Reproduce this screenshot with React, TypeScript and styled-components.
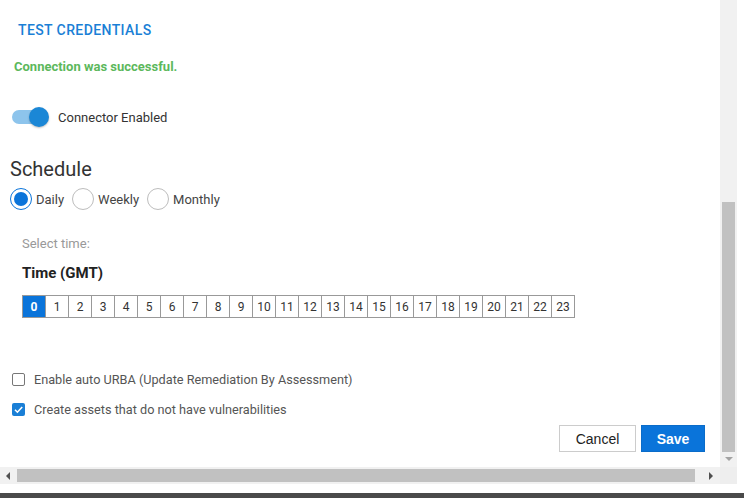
import React, { useState } from "react"
import styled, { createGlobalStyle } from "styled-components"

const GlobalStyle = createGlobalStyle`
    html, body {
        margin: 0;
        padding: 0;
        background: #ffffff;
    }
    body {
        font-family: Roboto, "Liberation Sans", sans-serif;
        color: #333333;
    }
`

const Page = styled.div`
    width: 744px;
    height: 498px;
    display: flex;
    flex-direction: column;
    overflow: hidden;
    background: #ffffff;
`
const Top = styled.div`
    display: flex;
    height: 467px;
`
const Content = styled.div`
    width: 720px;
    box-sizing: border-box;
    padding: 21px 15px 0 10px;
    display: flex;
    flex-direction: column;
`
const VScroll = styled.div`
    width: 17px;
    background: #f1f1f1;
    display: flex;
    flex-direction: column;
    justify-content: flex-end;
    align-items: center;
    padding-bottom: 6px;
    box-sizing: border-box;
`
const VThumb = styled.div`
    width: 13px;
    height: 250px;
    background: #c1c1c1;
`
const Arrow = styled.div<{ dir: "down" | "left" | "right"; color: string }>`
    width: 0;
    height: 0;
    border: 4px solid transparent;
    ${({ dir, color }) =>
        dir === "down"
            ? `border-top: 4px solid ${color}; border-bottom-width: 0; margin-top: 5px;`
            : dir === "left"
            ? `border-right: 4px solid ${color}; border-left-width: 0;`
            : `border-left: 4px solid ${color}; border-right-width: 0;`}
`
const HScrollRow = styled.div`
    display: flex;
    height: 17px;
`
const HScroll = styled.div`
    width: 720px;
    background: #f1f1f1;
    display: flex;
    align-items: center;
    padding: 0 7px 0 6px;
    box-sizing: border-box;
    gap: 7px;
`
const HThumb = styled.div`
    flex: 1;
    height: 13px;
    background: #c1c1c1;
    margin-right: 7px;
`
const Corner = styled.div`
    width: 17px;
    background: #eeeeee;
`
const DarkBar = styled.div`
    margin-top: 9px;
    height: 5px;
    background: #4a4a4a;
`

const LinkButton = styled.div`
    margin: 1px 0 0 8px;
    font-size: 14px;
    line-height: 16px;
    font-weight: 500;
    letter-spacing: 0.4px;
    color: #1a7fd6;
    text-transform: uppercase;
`
const Success = styled.div`
    margin: 21px 0 0 4px;
    font-size: 13px;
    line-height: 16px;
    font-weight: 700;
    color: #5cb85c;
`
const ToggleRow = styled.div`
    margin: 32px 0 0 2px;
    display: flex;
    align-items: center;
    height: 20px;
    font-size: 13px;
    color: #333333;
`
const Track = styled.div<{ on: boolean }>`
    position: relative;
    width: 34px;
    height: 14px;
    border-radius: 7px;
    background: ${({ on }) => (on ? "#8dc4ec" : "#cccccc")};
    margin-right: 12px;
`
const Knob = styled.div<{ on: boolean }>`
    position: absolute;
    top: -3px;
    left: ${({ on }) => (on ? "17px" : "-3px")};
    width: 20px;
    height: 20px;
    border-radius: 50%;
    background: ${({ on }) => (on ? "#1b87d6" : "#f5f5f5")};
    box-shadow: 0 1px 2px rgba(0, 0, 0, 0.25);
`
const Heading = styled.div`
    margin-top: 30px;
    font-size: 20px;
    line-height: 24px;
    color: #333333;
`
const RadioGroup = styled.div`
    display: flex;
    align-items: center;
    margin-top: 7px;
    height: 22px;
`
const RadioLabel = styled.label`
    display: flex;
    align-items: center;
    gap: 4px;
    margin-right: 8px;
    font-size: 13px;
    color: #444444;
    cursor: pointer;
`
const RadioCircle = styled.span<{ checked: boolean }>`
    width: 22px;
    height: 22px;
    box-sizing: border-box;
    border-radius: 50%;
    border: ${({ checked }) =>
        checked ? "1.5px solid #0a74da" : "1px solid #bdbdbd"};
    display: flex;
    align-items: center;
    justify-content: center;
    &::after {
        content: "";
        width: 14px;
        height: 14px;
        border-radius: 50%;
        background: ${({ checked }) => (checked ? "#0a74da" : "transparent")};
    }
`
const TimeBlock = styled.div`
    margin: 26px 0 0 12px;
    display: flex;
    flex-direction: column;
`
const Muted = styled.div`
    font-size: 13px;
    line-height: 16px;
    color: #999999;
`
const SubHeading = styled.div`
    margin-top: 12px;
    font-size: 15px;
    line-height: 18px;
    font-weight: 700;
    color: #222222;
`
const HourGrid = styled.div`
    margin-top: 13px;
    display: flex;
`
const Hour = styled.div<{ selected: boolean }>`
    width: 24px;
    height: 23px;
    box-sizing: border-box;
    border: 1px solid #999999;
    margin-left: -1px;
    &:first-child {
        margin-left: 0;
    }
    display: flex;
    align-items: center;
    justify-content: center;
    font-size: 12px;
    font-weight: ${({ selected }) => (selected ? 700 : 400)};
    color: ${({ selected }) => (selected ? "#ffffff" : "#333333")};
    background: ${({ selected }) => (selected ? "#0a74da" : "#ffffff")};
    position: relative;
    z-index: ${({ selected }) => (selected ? 1 : 0)};
    cursor: pointer;
`
const Options = styled.div`
    margin: 55px 0 0 2px;
    display: flex;
    flex-direction: column;
    gap: 17px;
`
const CheckRow = styled.label`
    display: flex;
    align-items: center;
    gap: 9px;
    font-size: 12.7px;
    color: #555555;
    height: 13px;
`
const Box = styled.span<{ checked: boolean }>`
    width: 13px;
    height: 13px;
    box-sizing: border-box;
    border-radius: 2px;
    border: ${({ checked }) => (checked ? "none" : "1.5px solid #777777")};
    background: ${({ checked }) => (checked ? "#1a7fd6" : "#ffffff")};
    display: flex;
    align-items: center;
    justify-content: center;
`
const Actions = styled.div`
    margin-top: 9px;
    display: flex;
    justify-content: flex-end;
    gap: 5px;
`
const Button = styled.button<{ primary?: boolean }>`
    height: 27px;
    padding: 0;
    width: ${({ primary }) => (primary ? "64px" : "77px")};
    font-family: "Liberation Sans", Arial, sans-serif;
    font-size: 14px;
    font-weight: ${({ primary }) => (primary ? 700 : 400)};
    color: ${({ primary }) => (primary ? "#ffffff" : "#222222")};
    background: ${({ primary }) => (primary ? "#0a74da" : "#ffffff")};
    border: 1px solid ${({ primary }) => (primary ? "#0a6cc9" : "#cccccc")};
    border-radius: 0;
    cursor: pointer;
`

const hours = Array.from({ length: 24 }, (_, i) => i)

export default function App() {
    const [enabled, setEnabled] = useState(true)
    const [schedule, setSchedule] = useState("Daily")
    const [hour, setHour] = useState(0)
    const [urba, setUrba] = useState(false)
    const [assets, setAssets] = useState(true)

    return (
        <Page>
            <GlobalStyle />
            <Top>
                <Content>
                    <LinkButton>Test Credentials</LinkButton>
                    <Success>Connection was successful.</Success>
                    <ToggleRow onClick={() => setEnabled(!enabled)}>
                        <Track on={enabled}>
                            <Knob on={enabled} />
                        </Track>
                        Connector Enabled
                    </ToggleRow>
                    <Heading>Schedule</Heading>
                    <RadioGroup>
                        {["Daily", "Weekly", "Monthly"].map((s) => (
                            <RadioLabel key={s} onClick={() => setSchedule(s)}>
                                <RadioCircle checked={schedule === s} />
                                {s}
                            </RadioLabel>
                        ))}
                    </RadioGroup>
                    <TimeBlock>
                        <Muted>Select time:</Muted>
                        <SubHeading>Time (GMT)</SubHeading>
                        <HourGrid>
                            {hours.map((h) => (
                                <Hour
                                    key={h}
                                    selected={hour === h}
                                    onClick={() => setHour(h)}
                                >
                                    {h}
                                </Hour>
                            ))}
                        </HourGrid>
                    </TimeBlock>
                    <Options>
                        <CheckRow onClick={() => setUrba(!urba)}>
                            <Box checked={urba} />
                            Enable auto URBA (Update Remediation By Assessment)
                        </CheckRow>
                        <CheckRow onClick={() => setAssets(!assets)}>
                            <Box checked={assets}>
                                {assets && (
                                    <svg width="11" height="11" viewBox="0 0 11 11">
                                        <path
                                            d="M2 5.8 L4.4 8.2 L9.2 3"
                                            fill="none"
                                            stroke="#ffffff"
                                            strokeWidth="1.6"
                                        />
                                    </svg>
                                )}
                            </Box>
                            Create assets that do not have vulnerabilities
                        </CheckRow>
                    </Options>
                    <Actions>
                        <Button>Cancel</Button>
                        <Button primary>Save</Button>
                    </Actions>
                </Content>
                <VScroll>
                    <VThumb />
                    <Arrow dir="down" color="#a3a3a3" />
                </VScroll>
            </Top>
            <HScrollRow>
                <HScroll>
                    <Arrow dir="left" color="#505050" />
                    <HThumb />
                    <Arrow dir="right" color="#505050" />
                </HScroll>
                <Corner />
            </HScrollRow>
            <DarkBar />
        </Page>
    )
}
